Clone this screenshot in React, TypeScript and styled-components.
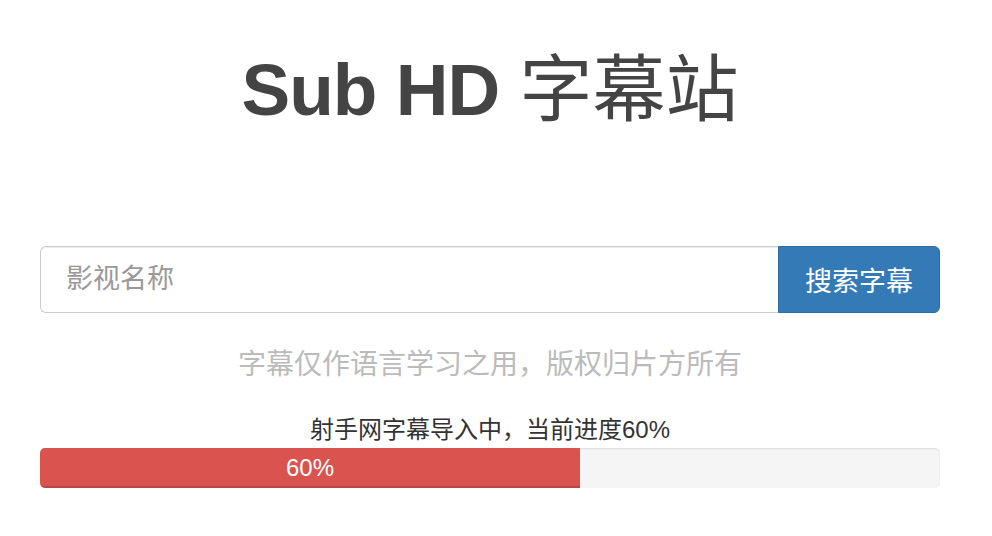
import React from 'react';
import styled, {createGlobalStyle} from 'styled-components';

const GlobalStyle = createGlobalStyle`
  html, body {
    margin: 0;
    padding: 0;
    background: #fff;
  }
  body {
    font-family: "Liberation Sans", "Noto Sans CJK SC", sans-serif;
    color: #333;
  }
  * {
    box-sizing: border-box;
  }
`

const Container = styled.div`
  width: 900px;
  margin-left: 40px;
  padding-top: 40px;
`

const Title = styled.h1`
  margin: 0;
  text-align: center;
  font-size: 73px;
  font-weight: 400;
  line-height: 100px;
  color: #444;

  & > b {
    font-weight: 700;
    letter-spacing: -1px;
  }
`

const SearchRow = styled.form`
  display: flex;
  margin-top: 106px;
  height: 67px;
`

const SearchInput = styled.input`
  flex: 1;
  height: 100%;
  padding: 0 25px;
  font-family: inherit;
  font-size: 27px;
  color: #555;
  border: 1px solid #ccc;
  border-right: none;
  border-radius: 6px 0 0 6px;
  box-shadow: inset 0 1px 1px rgba(0, 0, 0, .075);
  outline: none;

  &::placeholder {
    color: #999;
  }
`

const SearchButton = styled.button`
  width: 162px;
  height: 100%;
  font-family: inherit;
  font-size: 27px;
  color: #fff;
  background: #337ab7;
  border: 1px solid #2e6da4;
  border-radius: 0 6px 6px 0;
  cursor: pointer;
`

const Notice = styled.p`
  margin: 34px 0 0;
  text-align: center;
  font-size: 28px;
  line-height: 36px;
  color: #bbb;
`

const ProgressLabel = styled.div`
  margin-top: 31px;
  text-align: center;
  font-size: 24px;
  line-height: 32px;
  color: #333;
`

const ProgressTrack = styled.div`
  height: 40px;
  margin-top: 2px;
  background: #f5f5f5;
  border-radius: 5px;
  overflow: hidden;
  box-shadow: inset 0 1px 2px rgba(0, 0, 0, .1);
  display: flex;
`

const ProgressFill = styled.div<{ $color: string }>`
  height: 100%;
  background: ${p => p.$color};
  box-shadow: inset 0 -2px 0 rgba(0, 0, 0, .15);
  display: flex;
  align-items: center;
  justify-content: center;
  color: #fff;
  font-size: 24px;
`

const progress = 60

export default function App() {
    return (
        <>
            <GlobalStyle/>
            <Container>
                <Title><b>Sub HD</b> 字幕站</Title>
                <SearchRow onSubmit={e => e.preventDefault()}>
                    <SearchInput placeholder="影视名称"/>
                    <SearchButton type="submit">搜索字幕</SearchButton>
                </SearchRow>
                <Notice>字幕仅作语言学习之用，版权归片方所有</Notice>
                <ProgressLabel>射手网字幕导入中，当前进度{progress}%</ProgressLabel>
                <ProgressTrack>
                    <ProgressFill $color="#d9534f" style={{width: `${progress}%`}}>{progress}%</ProgressFill>
                </ProgressTrack>
            </Container>
        </>
    )
}
